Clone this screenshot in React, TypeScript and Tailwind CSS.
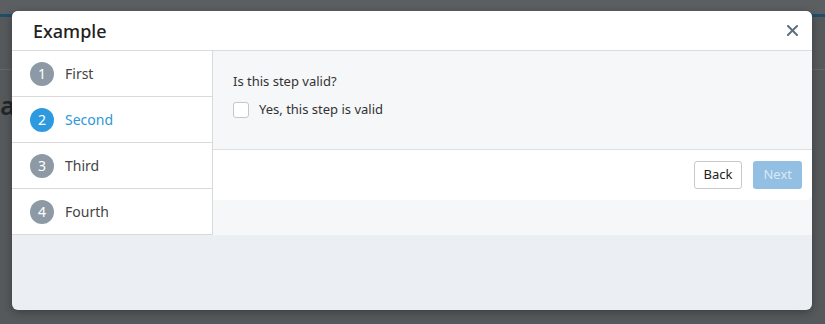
import { useState } from 'react';

const steps = ['First', 'Second', 'Third', 'Fourth'];

export default function App() {
  const [current] = useState(1);
  const [valid, setValid] = useState(false);

  return (
    <div
      className="relative w-[825px] h-[324px] overflow-hidden bg-[#55595c]"
      style={{ fontFamily: '"Noto Sans", "Open Sans", Arial, sans-serif' }}
    >
      {/* page behind the overlay */}
      <div className="h-[14px] bg-[#5b5f62]" />
      <div className="h-[3px] bg-[#1f4d6b]" />
      <div className="h-[53px] border-b border-[#63676a]" />
      <div className="pt-[22px] text-[26px] font-semibold text-[#232628] leading-none">a</div>

      {/* modal */}
      <div className="absolute left-[12px] top-[11px] w-[800px] h-[299px] rounded-[6px] bg-[#ebeff3] overflow-hidden shadow-[0_2px_8px_rgba(0,0,0,0.3)]">
        <div className="h-[40px] flex items-center justify-between bg-white border-b border-[#dadcde] pl-[21px] pr-[12px]">
          <span className="text-[18px] text-[#222] font-medium pt-[1px]">Example</span>
          <button className="w-[16px] h-[16px] flex items-center justify-center">
            <svg width="11" height="11" viewBox="0 0 11 11">
              <path d="M1 1L10 10M10 1L1 10" stroke="#5d7183" strokeWidth="2" strokeLinecap="square" />
            </svg>
          </button>
        </div>

        <div className="flex h-[184px]">
          <div className="w-[201px] bg-white border-r border-[#d9d9d9]">
            {steps.map((s, i) => {
              const active = i === current;
              return (
                <div
                  key={s}
                  className="h-[46px] flex items-center gap-[11px] pl-[18px] border-b border-[#d9d9d9]"
                >
                  <span
                    className={
                      'w-[24px] h-[24px] rounded-full flex items-center justify-center text-[14px] text-white ' +
                      (active ? 'bg-[#2d9ae0]' : 'bg-[#8d9aa5]')
                    }
                  >
                    {i + 1}
                  </span>
                  <span className={'text-[14px] ' + (active ? 'text-[#2d98da]' : 'text-[#444]')}>{s}</span>
                </div>
              );
            })}
          </div>

          <div className="flex-1 flex flex-col bg-[#f6f7f9]">
            <div className="h-[99px] px-[20px] pt-[20px] border-b border-[#dcdee0]">
              <p className="text-[13px] text-[#333] leading-[20px]">Is this step valid?</p>
              <label className="mt-[9px] flex items-center gap-[10px] cursor-pointer">
                <span
                  onClick={() => setValid(!valid)}
                  className="w-[16px] h-[16px] rounded-[3px] border border-[#c4c6c8] bg-white"
                />
                <span className="text-[13px] text-[#333]">Yes, this step is valid</span>
              </label>
            </div>
            <div className="h-[50px] bg-white rounded-br-[6px] flex items-center justify-end gap-[11px] pr-[10px]">
              <button className="h-[28px] px-[9px] rounded-[3px] border border-[#c8c8c8] bg-white text-[13px] text-[#222]">
                Back
              </button>
              <button className="h-[28px] px-[10px] rounded-[3px] bg-[#93bfe3] text-[13px] text-[#d9e8f5]">
                Next
              </button>
            </div>
          </div>
        </div>
      </div>
    </div>
  );
}
